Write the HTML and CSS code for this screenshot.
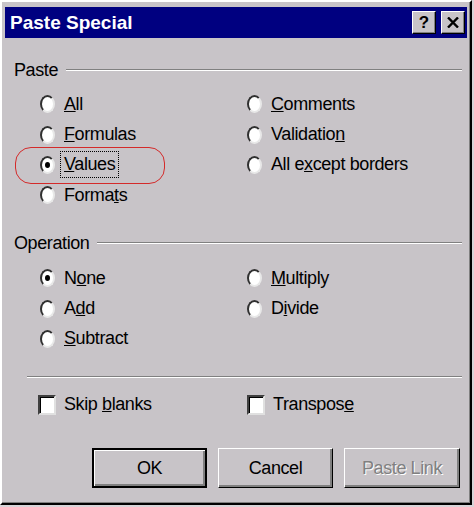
FILE: index.html
```html
<!DOCTYPE html>
<html>
<head>
<meta charset="utf-8">
<title>Paste Special</title>
<link rel="stylesheet" href="styles.css">
</head>
<body>
<div class="window">
  <div class="titlebar">
    <span class="title">Paste Special</span>
    <div class="tbtns">
      <span class="tbtn">?</span>
      <span class="tbtn"><svg width="12" height="11" viewBox="0 0 12 11"><path d="M1 0.5 L11 10.5 M11 0.5 L1 10.5" stroke="#000" stroke-width="2.4" fill="none"/></svg></span>
    </div>
  </div>
  <div class="content">
    <div class="group-head"><span>Paste</span><i class="rule"></i></div>
    <div class="options paste">
      <div class="opt"><span class="radio"></span><span class="label"><u>A</u>ll</span></div>
      <div class="opt"><span class="radio"></span><span class="label"><u>C</u>omments</span></div>
      <div class="opt"><span class="radio"></span><span class="label"><u>F</u>ormulas</span></div>
      <div class="opt"><span class="radio"></span><span class="label">Validatio<u>n</u></span></div>
      <div class="opt"><span class="radio checked"></span><span class="label focus"><u>V</u>alues</span></div>
      <div class="opt"><span class="radio"></span><span class="label">All e<u>x</u>cept borders</span></div>
      <div class="opt"><span class="radio"></span><span class="label">Forma<u>t</u>s</span></div>
      <span class="annot"></span>
    </div>
    <div class="group-head op-head"><span>Operation</span><i class="rule"></i></div>
    <div class="options op">
      <div class="opt"><span class="radio checked"></span><span class="label">N<u>o</u>ne</span></div>
      <div class="opt"><span class="radio"></span><span class="label"><u>M</u>ultiply</span></div>
      <div class="opt"><span class="radio"></span><span class="label">A<u>d</u>d</span></div>
      <div class="opt"><span class="radio"></span><span class="label">D<u>i</u>vide</span></div>
      <div class="opt"><span class="radio"></span><span class="label"><u>S</u>ubtract</span></div>
    </div>
    <i class="separator"></i>
    <div class="checks">
      <div class="opt"><span class="checkbox"></span><span class="label">Skip <u>b</u>lanks</span></div>
      <div class="opt"><span class="checkbox"></span><span class="label">Transpos<u>e</u></span></div>
    </div>
    <div class="buttons">
      <span class="btn default">OK</span>
      <span class="btn">Cancel</span>
      <span class="btn disabled">Paste Link</span>
    </div>
  </div>
</div>
</body>
</html>
```
FILE: styles.css
```css
* { box-sizing: border-box; }
html, body { margin: 0; }
body {
  background: #d8d4d8;
  font-family: "Liberation Sans", Arial, sans-serif;
  width: 474px;
  height: 507px;
  overflow: hidden;
}
.window {
  width: 472px;
  height: 505px;
  background: #c8c4c8;
  border-style: solid;
  border-width: 2px;
  border-color: #ffffff #000000 #000000 #ffffff;
  box-shadow: inset -1px -1px #808080;
  padding: 5px 3px 0 3px;
  display: flex;
  flex-direction: column;
}
.titlebar {
  height: 31px;
  flex: none;
  background: #000080;
  color: #fff;
  display: flex;
  align-items: center;
  justify-content: space-between;
  padding: 0 2px 0 5px;
}
.title {
  font-weight: bold;
  font-size: 19px;
}
.tbtns { display: flex; gap: 5px; }
.tbtn {
  width: 24px;
  height: 23px;
  background: #c8c4c8;
  border: 1px solid;
  border-color: #fff #000 #000 #fff;
  box-shadow: inset -1px -1px #808080;
  display: flex;
  align-items: center;
  justify-content: center;
  color: #000;
  font-weight: bold;
  font-size: 17px;
}
.content {
  flex: 1;
  display: flex;
  flex-direction: column;
  padding: 0 5px 0 9px;
  font-size: 18px;
  letter-spacing: -0.4px;
  color: #000;
}
.group-head {
  display: flex;
  align-items: center;
  gap: 8px;
  height: 20px;
  margin-top: 22px;
}
.op-head { margin-top: 22.6px; }
.rule {
  flex: 1;
  height: 2px;
  border-top: 1px solid #808080;
  border-bottom: 1px solid #fff;
}
.options {
  display: grid;
  grid-template-columns: 207px 1fr;
  grid-auto-rows: 30.4px;
  margin-left: 26px;
  margin-top: 9px;
  position: relative;
}
.options.op { margin-top: 9.8px; }
.opt {
  display: flex;
  align-items: center;
}
.radio {
  flex: none;
  width: 15px;
  height: 18px;
  border-radius: 50%;
  background: #fff;
  border: 2px solid;
  border-color: #303030 #e8e8e8 #e8e8e8 #303030;
  position: relative;
}
.radio.checked::after {
  content: "";
  position: absolute;
  left: 3px;
  top: 4px;
  width: 5px;
  height: 6px;
  border-radius: 50%;
  background: #000;
}
.label {
  margin-left: 6px;
  padding: 2px 3px;
  white-space: nowrap;
}
.focus { outline: 1px dotted #000; }
.annot {
  position: absolute;
  left: -25px;
  top: 58px;
  width: 150px;
  height: 37px;
  border: 1.5px solid #d42a2a;
  border-radius: 16px;
  pointer-events: none;
}
.separator {
  display: block;
  height: 2px;
  margin: 22px 0 0 13px;
  border-top: 1px solid #808080;
  border-bottom: 1px solid #fff;
}
.checks {
  display: grid;
  grid-template-columns: 209px 1fr;
  height: 24px;
  margin: 14px 0 0 24px;
}
.checkbox {
  flex: none;
  width: 18px;
  height: 20px;
  background: #fff;
  border: 2px solid;
  border-color: #404040 #e0e0e0 #e0e0e0 #404040;
  box-shadow: inset 1px 1px #000;
}
.checks .label { margin-left: 5px; }
.buttons {
  display: flex;
  justify-content: flex-end;
  gap: 11px;
  margin: 32px 2px 0 0;
}
.btn {
  width: 115px;
  height: 40px;
  background: #c8c4c8;
  border: 1px solid;
  border-color: #fff #000 #000 #fff;
  box-shadow: inset -2px -2px #808080;
  display: flex;
  align-items: center;
  justify-content: center;
}
.btn.default {
  border: 2px solid #000;
  box-shadow: inset 1px 1px #fff, inset -2px -2px #808080;
}
.btn.disabled {
  width: 116px;
  color: #808080;
  text-shadow: 1px 1px #fff;
}
```
